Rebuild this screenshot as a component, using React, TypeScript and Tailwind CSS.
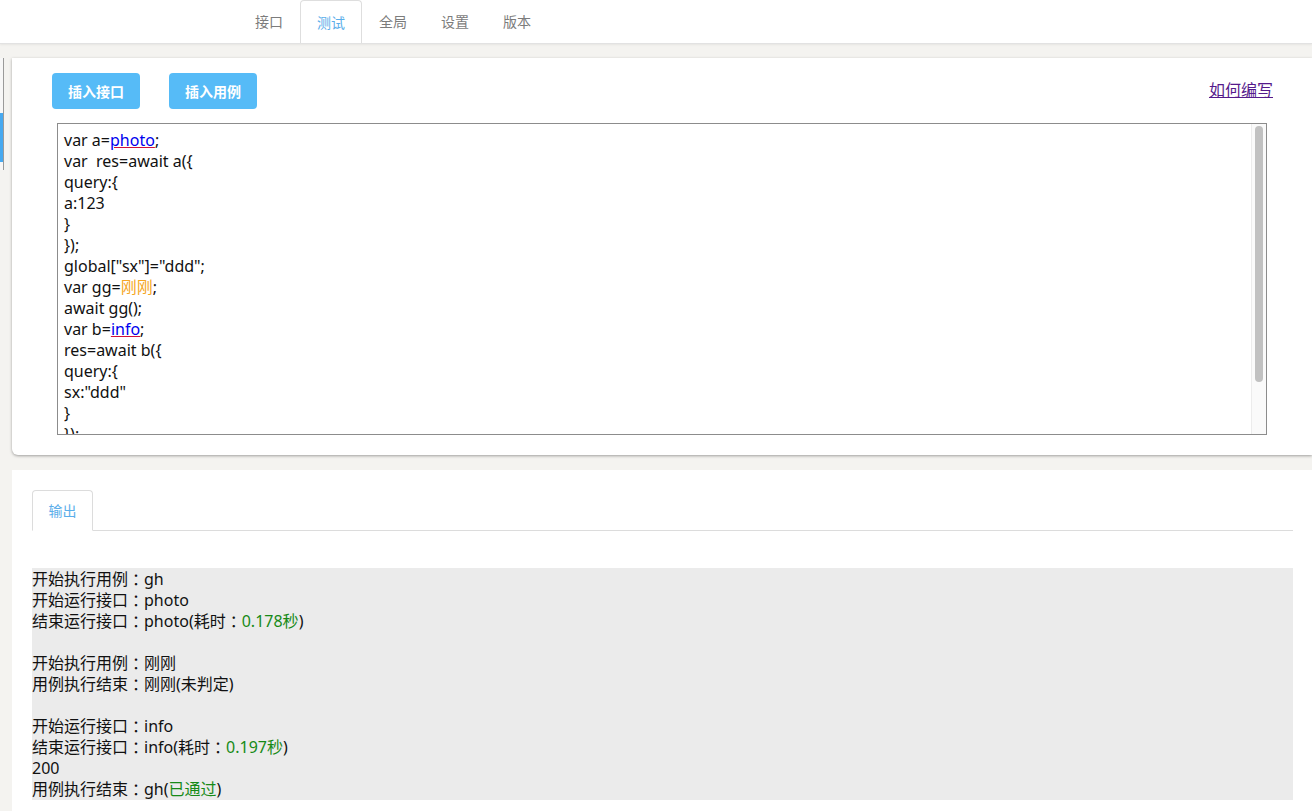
import React from "react";

const codeFont = { fontFamily: '"Noto Sans", "Noto Sans CJK SC", sans-serif' };

function Tab({ label, active }: { label: string; active?: boolean }) {
  return (
    <div
      className={
        "w-[62px] h-[43px] flex items-center justify-center text-[14px] " +
        (active
          ? "bg-white border border-b-0 border-[#dedede] rounded-t-[4px] text-[#5aaeea]"
          : "text-[#7c7c7c] border border-transparent")
      }
    >
      {label}
    </div>
  );
}

function Colon() {
  return (
    <span
      className="inline-block align-top h-[21px] leading-[21px] overflow-visible"
      style={{ fontFamily: '"Noto Sans CJK TC", "Noto Sans CJK SC", sans-serif' }}
    >
      ：
    </span>
  );
}

function Line({ children }: { children?: React.ReactNode }) {
  return <div className="h-[21px] whitespace-nowrap">{children}</div>;
}

export default function App() {
  const ui = { fontFamily: '"Noto Sans CJK SC", "Noto Sans", sans-serif' };
  return (
    <div className="w-[1312px] h-[811px] overflow-hidden bg-[#f4f3f0]" style={ui}>
      {/* top nav */}
      <div className="h-[44px] bg-white border-b border-[#e2e2e2] shadow-[0_1px_2px_rgba(0,0,0,0.06)] flex items-end pl-[238px]">
        <div className="flex">
          <Tab label="接口" />
          <Tab label="测试" active />
          <Tab label="全局" />
          <Tab label="设置" />
          <Tab label="版本" />
        </div>
      </div>

      <div className="flex">
        {/* left collapsed strip */}
        <div className="w-[12px] shrink-0">
          <div className="mt-[14px] w-[4px] h-[112px] bg-[#f7f7f7] border-r border-[#9a9a9a] flex flex-col">
            <div className="h-[55px]" />
            <div className="h-[49px] bg-[#47a9f0]" />
          </div>
        </div>

        <div className="flex-1 min-w-0 pt-[14px]">
          {/* editor card */}
          <div className="h-[397px] bg-white rounded-bl-[6px] shadow-[0_1px_3px_rgba(0,0,0,0.35)] pl-[40px] pr-[39px] pt-[15px]">
            <div className="flex items-start">
              <button className="w-[88px] h-[36px] rounded-[4px] bg-[#56bbf7] text-white text-[14px] font-bold">
                插入接口
              </button>
              <button className="ml-[29px] w-[88px] h-[36px] rounded-[4px] bg-[#56bbf7] text-white text-[14px] font-bold">
                插入用例
              </button>
              <div className="flex-1" />
              <a className="mt-[5px] text-[16px] text-[#551a8b] underline leading-[22px]" href="#">
                如何编写
              </a>
            </div>
            <div className="mt-[14px] ml-[5px] mr-[6px] h-[312px] border border-[#8c8c8c] flex bg-white">
              <div
                className="flex-1 overflow-hidden pl-[6px] pt-[6px] text-[16px] leading-[21px] text-[#111] whitespace-pre"
                style={codeFont}
              >
                <div>
                  var a=<span className="text-[#0000ee] underline decoration-[#d0103a]">photo</span>;
                </div>
                <div>var  res=await a({"{"}</div>
                <div>query:{"{"}</div>
                <div>a:123</div>
                <div>{"}"}</div>
                <div>{"});"}</div>
                <div>global["sx"]="ddd";</div>
                <div>
                  var gg=<span className="text-[#f5a623]">刚刚</span>;
                </div>
                <div>await gg();</div>
                <div>
                  var b=<span className="text-[#0000ee] underline decoration-[#d0103a]">info</span>;
                </div>
                <div>res=await b({"{"}</div>
                <div>query:{"{"}</div>
                <div>sx:"ddd"</div>
                <div>{"}"}</div>
                <div>{"});"}</div>
                <div>log(res.status);</div>
                <div>return true;</div>
              </div>
              <div className="w-[15px] shrink-0 border-l border-[#ececec] bg-[#fafafa] pt-[2px] flex justify-center">
                <div className="w-[8px] h-[256px] rounded-full bg-[#c1c1c1]" />
              </div>
            </div>
          </div>

          {/* output card */}
          <div className="mt-[15px] h-[400px] bg-white pl-[20px] pr-[19px] pt-[20px]">
            <div className="flex border-b border-[#dcdcdc]">
              <div className="w-[61px] h-[41px] -mb-px bg-white border border-b-white border-[#dcdcdc] rounded-t-[4px] flex items-center justify-center text-[14px] text-[#5aaeea]">
                输出
              </div>
            </div>
            <div
              className="mt-[37px] pt-[1px] bg-[#ebebeb] text-[16px] leading-[21px] text-[#111]"
              style={codeFont}
            >
              <Line>开始执行用例<Colon />gh</Line>
              <Line>开始运行接口<Colon />photo</Line>
              <Line>
                结束运行接口<Colon />photo(耗时<Colon /><span className="text-[#178a17]">0.178秒</span>)
              </Line>
              <Line />
              <Line>开始执行用例<Colon />刚刚</Line>
              <Line>用例执行结束<Colon />刚刚(未判定)</Line>
              <Line />
              <Line>开始运行接口<Colon />info</Line>
              <Line>
                结束运行接口<Colon />info(耗时<Colon /><span className="text-[#178a17]">0.197秒</span>)
              </Line>
              <Line>200</Line>
              <Line>
                用例执行结束<Colon />gh(<span className="text-[#178a17]">已通过</span>)
              </Line>
            </div>
          </div>
        </div>
      </div>
    </div>
  );
}
